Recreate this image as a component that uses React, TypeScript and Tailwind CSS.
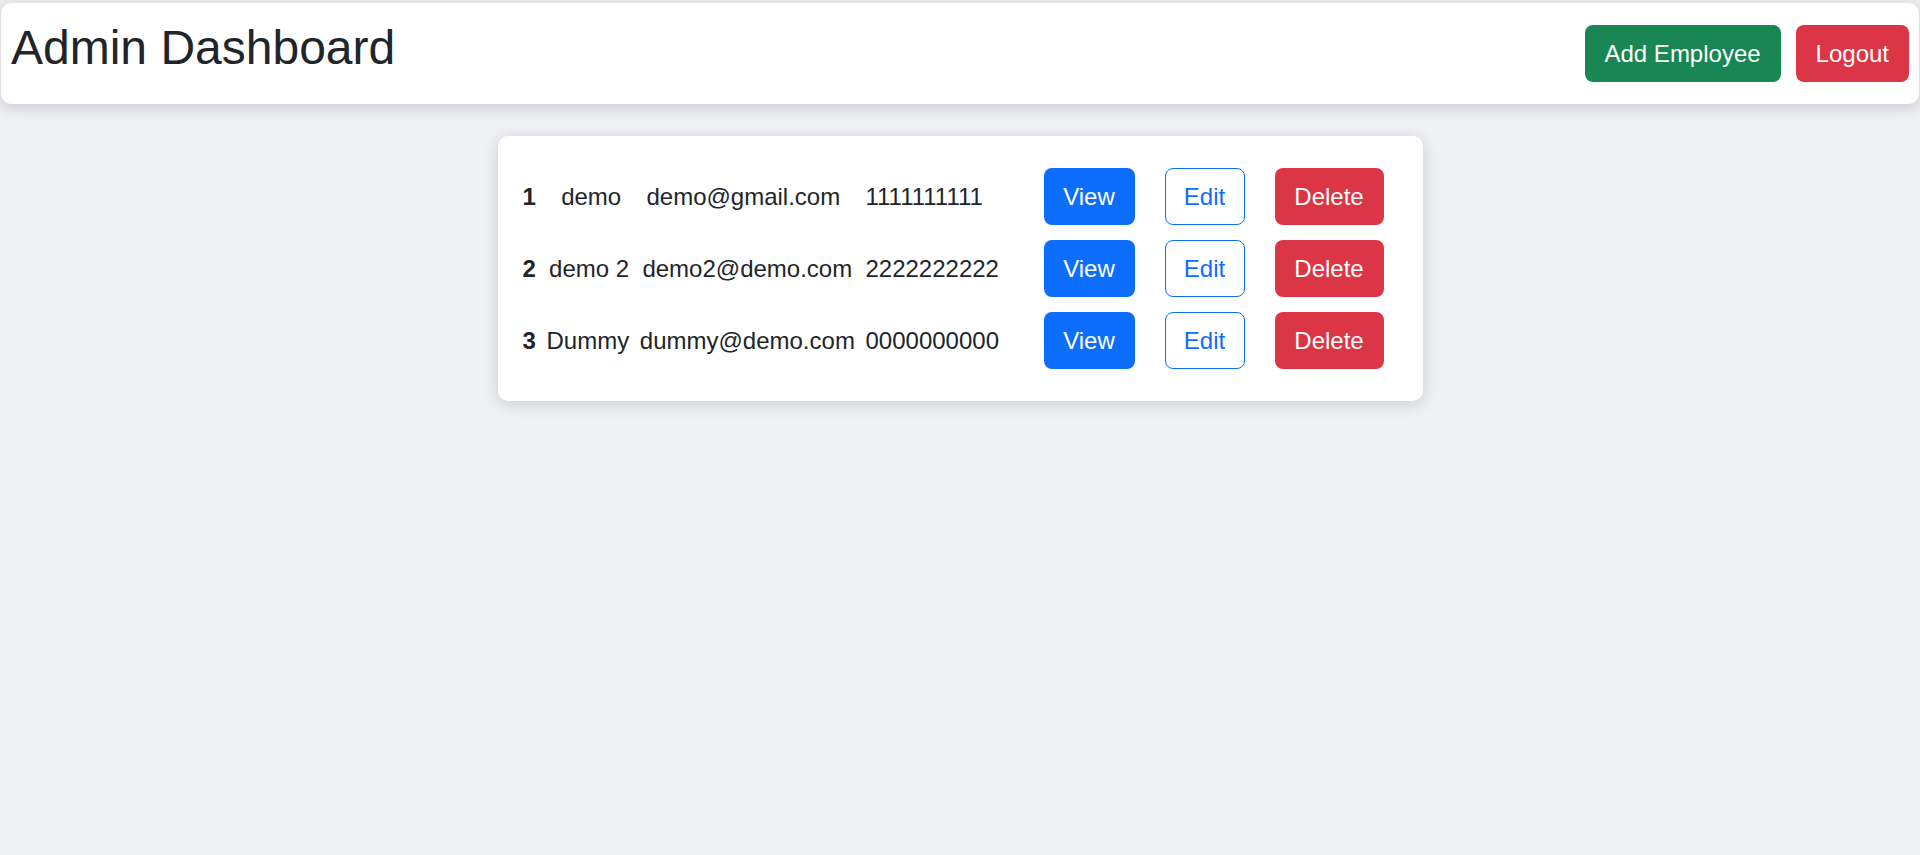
import React from "react";

type Employee = {
  id: number;
  name: string;
  email: string;
  phone: string;
};

const employees: Employee[] = [
  { id: 1, name: "demo", email: "demo@gmail.com", phone: "1111111111" },
  { id: 2, name: "demo 2", email: "demo2@demo.com", phone: "2222222222" },
  { id: 3, name: "Dummy", email: "dummy@demo.com", phone: "0000000000" },
];

export default function App() {
  return (
    <div className="min-h-screen bg-[#f0f1f5] pt-[3px] font-['Liberation_Sans',Arial,sans-serif] text-[#212529]">
      {/* Header */}
      <header className="mx-[1px] flex h-[101px] items-start justify-between rounded-[10px] bg-white px-[10px] shadow-[0_3px_16px_rgba(0,0,0,0.18)]">
        <h1 className="mt-[16px] text-[48px] leading-[1.2] font-normal">Admin Dashboard</h1>
        <div className="flex gap-[15px] self-center">
          <button className="h-[57px] rounded-[8px] bg-[#198754] px-[20px] text-[24px] text-white">
            Add Employee
          </button>
          <button className="h-[57px] rounded-[8px] bg-[#dc3545] px-[20px] text-[24px] text-white">
            Logout
          </button>
        </div>
      </header>

      {/* Employee list */}
      <main className="mt-[32px] flex justify-center">
        <div className="flex w-[925px] flex-col gap-[15px] rounded-[10px] bg-white py-[32px] pl-[25px] pr-[39px] shadow-[0_3px_16px_rgba(0,0,0,0.16)]">
          {employees.map((emp) => (
            <div key={emp.id} className="flex h-[57px] items-center">
              <div className="flex w-[476px] items-center justify-between text-[24px]">
                <span className="font-bold">{emp.id}</span>
                <span>{emp.name}</span>
                <span>{emp.email}</span>
                <span className="w-[133px] whitespace-nowrap">{emp.phone}</span>
              </div>
              <div className="ml-[45px] flex gap-[30px]">
                <button className="h-[57px] w-[91px] rounded-[8px] bg-[#0d6efd] text-[24px] text-white">View</button>
                <button className="h-[57px] w-[80px] rounded-[8px] border border-[#0d6efd] bg-white text-[24px] text-[#0d6efd]">
                  Edit
                </button>
                <button className="h-[57px] w-[109px] rounded-[8px] bg-[#dc3545] text-[24px] text-white">Delete</button>
              </div>
            </div>
          ))}
        </div>
      </main>
    </div>
  );
}
